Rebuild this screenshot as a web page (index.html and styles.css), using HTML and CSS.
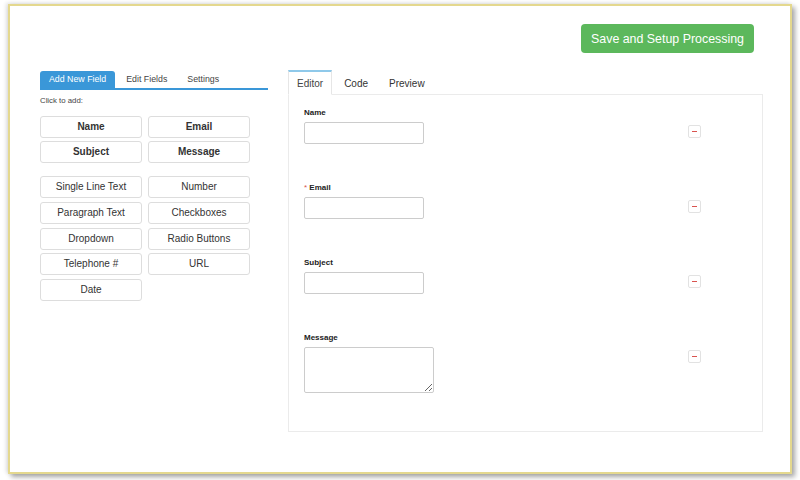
FILE: index.html
```html
<!DOCTYPE html>
<html>
<head>
<meta charset="utf-8">
<link rel="stylesheet" href="styles.css">
</head>
<body>
<div class="frame">
  <div class="topbar">
    <button class="save">Save and Setup Processing</button>
  </div>
  <div class="main">
    <div class="left">
      <div class="ltabs">
        <span class="ltab active">Add New Field</span>
        <span class="ltab">Edit Fields</span>
        <span class="ltab">Settings</span>
      </div>
      <div class="hint">Click to add:</div>
      <div class="grid grid1">
        <div class="fbtn bold">Name</div>
        <div class="fbtn bold">Email</div>
        <div class="fbtn bold">Subject</div>
        <div class="fbtn bold">Message</div>
      </div>
      <div class="grid grid2">
        <div class="fbtn">Single Line Text</div>
        <div class="fbtn">Number</div>
        <div class="fbtn">Paragraph Text</div>
        <div class="fbtn">Checkboxes</div>
        <div class="fbtn">Dropdown</div>
        <div class="fbtn">Radio Buttons</div>
        <div class="fbtn">Telephone #</div>
        <div class="fbtn">URL</div>
        <div class="fbtn">Date</div>
      </div>
    </div>
    <div class="right">
      <div class="rtabs">
        <span class="rtab active">Editor</span>
        <span class="rtab">Code</span>
        <span class="rtab">Preview</span>
      </div>
      <div class="panel">
        <div class="row">
          <div class="field">
            <div class="label">Name</div>
            <div class="input"></div>
          </div>
          <div class="remove"><span></span></div>
        </div>
        <div class="row">
          <div class="field">
            <div class="label"><span class="req">*</span> Email</div>
            <div class="input"></div>
          </div>
          <div class="remove"><span></span></div>
        </div>
        <div class="row">
          <div class="field">
            <div class="label">Subject</div>
            <div class="input"></div>
          </div>
          <div class="remove"><span></span></div>
        </div>
        <div class="row">
          <div class="field">
            <div class="label">Message</div>
            <textarea class="textarea"></textarea>
          </div>
          <div class="remove"><span></span></div>
        </div>
      </div>
    </div>
  </div>
</div>
</body>
</html>
```

FILE: styles.css
```css
* { box-sizing: border-box; }
html, body { margin: 0; padding: 0; background: #fff; }
body {
  width: 800px;
  height: 480px;
  overflow: hidden;
  font-family: "Liberation Sans", Arial, sans-serif;
  color: #333;
  padding: 4px 8px 6px 8px;
}
.frame {
  width: 784px;
  height: 470px;
  border: 2px solid #e4d88e;
  background: #fff;
  box-shadow: 3px 3px 5px rgba(0,0,0,0.35), -2px -1px 4px rgba(0,0,0,0.12);
  padding: 18px 27px 0 30px;
}
.topbar {
  display: flex;
  justify-content: flex-end;
  padding-right: 9px;
}
.save {
  background: #5cb85c;
  color: #fff;
  border: none;
  border-radius: 4px;
  height: 29px;
  width: 173px;
  padding: 0;
  font-family: "Liberation Sans", Arial, sans-serif;
  font-size: 12.4px;
}
.main {
  display: flex;
  gap: 20px;
  margin-top: 17px;
  align-items: flex-start;
}
.left {
  width: 228px;
  flex: none;
  padding-top: 1px;
}
.ltabs {
  display: flex;
  border-bottom: 2px solid #3a97d8;
  height: 19px;
}
.ltab {
  font-size: 8.8px;
  color: #444;
  height: 17px;
  line-height: 17px;
  padding: 0 9px;
  margin-right: 2px;
  border-radius: 3px 3px 0 0;
}
.ltab.active {
  background: #3a97d8;
  color: #fff;
}
.hint {
  font-size: 7.8px;
  color: #444;
  margin-top: 6px;
  line-height: 10px;
}
.grid {
  display: grid;
  grid-template-columns: 102px 102px;
  column-gap: 6px;
}
.grid1 { margin-top: 10px; row-gap: 3px; }
.grid2 { margin-top: 13px; row-gap: 3.75px; }
.fbtn {
  height: 22px;
  border: 1px solid #ddd;
  border-radius: 3px;
  font-size: 10px;
  line-height: 20px;
  text-align: center;
  color: #333;
  background: #fff;
}
.fbtn.bold { font-weight: bold; }
.right {
  width: 475px;
  flex: none;
}
.rtabs {
  display: flex;
  height: 24px;
  position: relative;
  z-index: 1;
}
.rtab {
  font-size: 10px;
  color: #333;
  height: 25px;
  line-height: 24px;
  padding: 0 8px;
  margin-right: 3px;
  border: 1px solid transparent;
  border-top-width: 2px;
}
.rtab.active {
  border-color: #8fc9ea #e6e6e6 #fff #e6e6e6;
  background: #fff;
  color: #444;
}
.panel {
  height: 338px;
  border: 1px solid #ebebeb;
  padding: 13px 61px 0 15px;
}
.row {
  display: flex;
  height: 75px;
}
.field { display: flex; flex-direction: column; }
.label {
  font-size: 8px;
  font-weight: bold;
  color: #222;
  line-height: 10px;
  margin-bottom: 4px;
}
.req { color: #d9534f; font-weight: normal; }
.input {
  width: 120px;
  height: 22px;
  border: 1px solid #ccc;
  border-radius: 2px;
}
.textarea {
  width: 130px;
  height: 46px;
  border: 1px solid #ccc;
  border-radius: 2px;
  margin: 0;
  padding: 0;
  resize: both;
}
.remove {
  margin-left: auto;
  margin-top: 17px;
  width: 13px;
  height: 13px;
  border: 1px solid #e2e2e2;
  border-radius: 2px;
  display: flex;
  align-items: center;
  justify-content: center;
}
.remove span {
  width: 5px;
  height: 1.5px;
  background: #d9534f;
}
```
